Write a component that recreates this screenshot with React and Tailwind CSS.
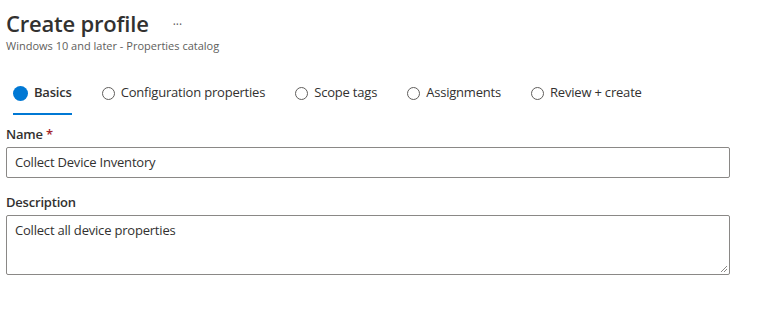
export default function App() {
  const steps = ['Configuration properties', 'Scope tags', 'Assignments', 'Review + create']

  return (
    <div className="w-[768px] h-[316px] bg-white text-[#323130] pl-[6px]" style={{ fontFamily: '"Segoe UI", "Open Sans", sans-serif' }}>
      <div className="flex items-center pt-[8px] h-[38px]">
        <h1 className="text-[22px] font-semibold leading-[28px] tracking-[-0.2px]">Create profile</h1>
        <span className="ml-[24px] text-[12px] text-[#605e5c] leading-none mt-[4px]">···</span>
      </div>
      <div className="text-[11px] text-[#605e5c] leading-[14px] mt-[1px]">Windows 10 and later - Properties catalog</div>

      <div className="flex items-center mt-[20px] h-[40px] pl-[7px]">
        <div className="relative flex items-center h-full">
          <span className="w-[15px] h-[15px] rounded-full bg-[#0078d4]"></span>
          <span className="ml-[6px] text-[13px] font-semibold tracking-[-0.2px]">Basics</span>
          <span className="absolute left-0 right-0 bottom-[-2px] h-[2px] bg-[#0078d4]"></span>
        </div>
        {steps.map((s) => (
          <div key={s} className="flex items-center ml-[30px]">
            <span className="w-[13px] h-[13px] rounded-full border border-[#605e5c]"></span>
            <span className="ml-[6px] text-[13px] tracking-[-0.2px]">{s}</span>
          </div>
        ))}
      </div>

      <div className="mt-[12px] w-[724px]">
        <div className="text-[13px] font-semibold leading-[18px] tracking-[-0.2px]">
          Name <span className="text-[#a4262c]">*</span>
        </div>
        <div className="mt-[4px] h-[31px] border border-[#8a8886] rounded-[2px] flex items-center px-[8px] text-[13px] tracking-[-0.2px]">
          Collect Device Inventory
        </div>
        <div className="mt-[15px] text-[13px] font-semibold leading-[18px] tracking-[-0.2px]">Description</div>
        <div className="relative mt-[4px] h-[60px] border border-[#8a8886] rounded-[2px] px-[8px] pt-[5px] text-[13px] tracking-[-0.2px]">
          Collect all device properties
          <svg className="absolute right-[1px] bottom-[1px]" width="9" height="9" viewBox="0 0 9 9">
            <line x1="8" y1="2" x2="2" y2="8" stroke="#8a8886" strokeWidth="1" />
            <line x1="8" y1="5" x2="5" y2="8" stroke="#8a8886" strokeWidth="1" />
          </svg>
        </div>
      </div>
    </div>
  )
}
